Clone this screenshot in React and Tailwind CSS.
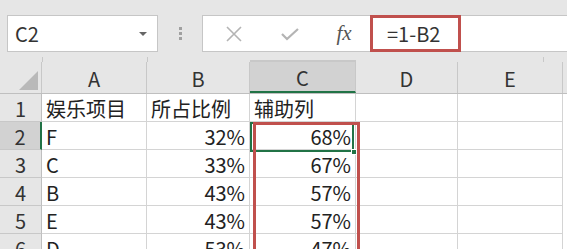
import React from 'react'

const cols = [
  { key: 'A', w: 105 },
  { key: 'B', w: 103 },
  { key: 'C', w: 106 },
  { key: 'D', w: 102 },
  { key: 'E', w: 105 },
]

const rows = [
  ['娱乐项目', '所占比例', '辅助列'],
  ['F', '32%', '68%'],
  ['C', '33%', '67%'],
  ['B', '43%', '57%'],
  ['E', '43%', '57%'],
  ['D', '53%', '47%'],
]

const font = { fontFamily: '"Noto Sans CJK SC", "Noto Sans", sans-serif' }

const App = () => {
  return (
    <div className="w-[567px] h-[249px] overflow-hidden bg-white text-[#222]" style={font}>
      {/* formula bar */}
      <div className="h-[62px] bg-[#e6e6e6] relative">
        <div className="flex items-start pt-[15px]">
          <div className="ml-[7px] w-[151px] h-[37px] bg-white border border-[#c6c6c6] flex items-center justify-between pl-[7px] pr-[10px]">
            <span className="text-[20px] text-[#333]">C2</span>
            <span className="w-0 h-0 border-l-[4px] border-r-[4px] border-t-[4px] border-l-transparent border-r-transparent border-t-[#666]"></span>
          </div>
          <div className="w-[44px] h-[37px] flex flex-col items-center justify-center gap-[2px]">
            <span className="w-[3px] h-[3px] bg-[#a0a0a0]"></span>
            <span className="w-[3px] h-[3px] bg-[#a0a0a0]"></span>
            <span className="w-[3px] h-[3px] bg-[#a0a0a0]"></span>
          </div>
          <div className="flex-1 h-[37px] bg-white border border-[#c6c6c6] border-r-0 flex items-center">
            <div className="w-[167px] flex items-center justify-around pl-[4px]">
              <svg width="18" height="18" viewBox="0 0 18 18">
                <path d="M2 2 L16 16 M16 2 L2 16" stroke="#b4b4b4" strokeWidth="1.6" fill="none" />
              </svg>
              <svg width="20" height="16" viewBox="0 0 20 16">
                <path d="M2 8 L7 13 L18 3" stroke="#b4b4b4" strokeWidth="2.2" fill="none" />
              </svg>
              <span className="text-[21px] italic text-[#555]" style={{ fontFamily: '"Liberation Serif", serif' }}>fx</span>
            </div>
            <div className="w-[91px] h-[37px] border-[3px] border-[#c0504d] flex items-center pl-[14px] -my-[1px]">
              <span className="text-[20px] text-[#333]">=1-B2</span>
            </div>
          </div>
        </div>
        <div className="absolute left-[42px] bottom-0 w-px h-[5px] bg-[#c8c8c8]"></div>
        <div className="absolute left-[147px] bottom-0 w-px h-[5px] bg-[#c8c8c8]"></div>
        <div className="absolute left-[250px] bottom-0 w-[106px] h-[2px] bg-[#c8c8c8]"></div>
        <div className="absolute left-[543px] bottom-0 w-px h-[5px] bg-[#c8c8c8]"></div>
      </div>

      {/* grid */}
      <div className="relative">
        <div className="flex h-[32px] bg-[#e6e6e6] border-b border-[#bfbfbf]">
          <div className="w-[42px] relative border-r border-[#c8c8c8]">
            <svg className="absolute right-[3px] bottom-[3px]" width="19" height="19" viewBox="0 0 20 20">
              <path d="M20 0 L20 20 L0 20 Z" fill="#b9b9b9" />
            </svg>
          </div>
          {cols.map(c => (
            <div
              key={c.key}
              className={
                c.key === 'C'
                  ? 'flex items-center justify-center pt-[2px] text-[20px] text-[#333] border-r border-[#c8c8c8] bg-[#d2d2d2] border-b-2 border-b-[#217346]'
                  : 'flex items-center justify-center pt-[2px] text-[20px] text-[#333] border-r border-[#c8c8c8]'
              }
              style={{ width: c.w }}
            >
              {c.key}
            </div>
          ))}
        </div>

        {rows.map((r, i) => (
          <div key={i} className="flex h-[28px]">
            <div
              className={
                i === 1
                  ? 'w-[42px] flex items-center justify-center pt-[2px] text-[20px] text-[#333] bg-[#d2d2d2] border-b border-[#c8c8c8] border-r-2 border-r-[#217346]'
                  : 'w-[42px] flex items-center justify-center pt-[2px] text-[20px] text-[#333] bg-[#e6e6e6] border-b border-[#c8c8c8] border-r border-r-[#bfbfbf]'
              }
            >
              {i + 1}
            </div>
            {cols.map((c, j) => {
              const v = r[j]
              const isNum = i > 0 && (j === 1 || j === 2)
              return (
                <div
                  key={c.key}
                  className={
                    isNum
                      ? 'border-r border-b border-[#d4d4d4] flex items-center justify-end pt-[2px] pr-[4px] text-[20px] whitespace-nowrap'
                      : 'border-r border-b border-[#d4d4d4] flex items-center pt-[2px] pl-[4px] text-[20px] whitespace-nowrap'
                  }
                  style={{ width: c.w }}
                >
                  {v}
                </div>
              )
            })}
          </div>
        ))}

        {/* selection of C2 */}
        <div className="absolute left-[250px] top-[60px] w-[104px] h-[30px] border-2 border-[#217346] pointer-events-none"></div>
        <div className="absolute left-[351px] top-[87px] w-[6px] h-[6px] bg-[#217346] border border-white"></div>
        {/* red highlight */}
        <div className="absolute left-[253px] top-[60px] w-[107px] h-[200px] border-[3px] border-[#c0504d] pointer-events-none"></div>
      </div>
    </div>
  )
}

export default App
